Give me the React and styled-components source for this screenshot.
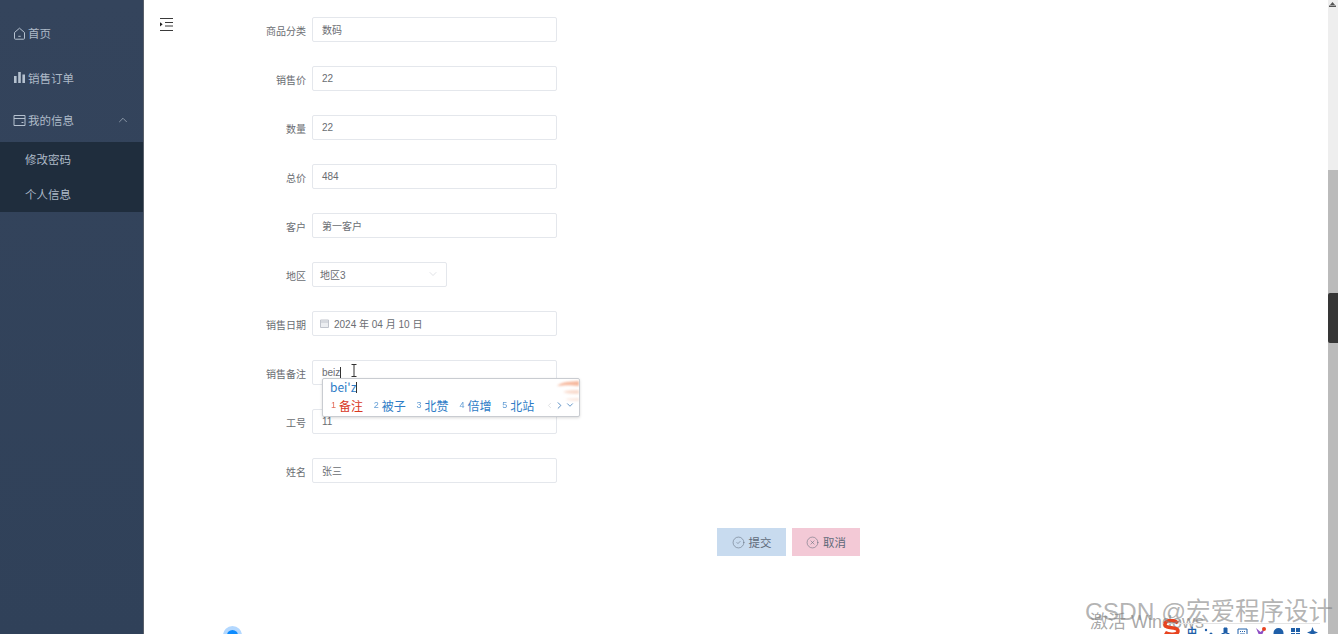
import React from "react";
import styled, { createGlobalStyle } from "styled-components";
import { ChevronDown, ChevronUp, ChevronLeft, ChevronRight, CircleCheck, CircleX } from "lucide-react";

const FONT = `"Noto Sans CJK SC", "Liberation Sans", sans-serif`;
const LATIN_FIRST = `"Liberation Sans", "Noto Sans CJK SC", sans-serif`;

const GlobalStyle = createGlobalStyle`
  html, body { margin: 0; padding: 0; height: 100%; overflow: hidden; background: #fff; }
  body { font-family: ${FONT}; }
`;

const Page = styled.div`
  position: relative;
  display: flex;
  width: 1338px;
  height: 634px;
  overflow: hidden;
  background: #fff;
`;

const Sidebar = styled.aside`
  width: 144px;
  flex: none;
  padding-top: 11px;
  box-sizing: border-box;
  background: linear-gradient(180deg, #34445c 0%, #304159 100%);
  border-right: 1px solid #59606a;
`;

const MenuItem = styled.div`
  display: flex;
  align-items: center;
  height: ${(p) => p.$h}px;
  box-sizing: border-box;
  padding: 0 13px ${(p) => p.$drop || 0}px 13px;
  gap: 2px;
  color: #aebac8;
  font-size: 11.5px;
`;

const MenuIcon = styled.svg`
  width: 13px;
  height: 13px;
  flex: none;
  fill: ${(p) => (p.$solid ? "#b5c1cf" : "none")};
  stroke: ${(p) => (p.$solid ? "none" : "#b5c1cf")};
  stroke-width: 1;
`;

const MenuArrow = styled(ChevronUp)`
  margin-left: auto;
  color: #aeb9c6;
`;

const SubMenu = styled.div`
  background: #1f2d3d;
`;

const SubItem = styled.div`
  display: flex;
  align-items: center;
  height: 35px;
  box-sizing: border-box;
  padding: 0 0 2px 25px;
  color: #aebac8;
  font-size: 11.5px;
`;

const ToggleColumn = styled.div`
  width: 100px;
  flex: none;
  padding: 18px 0 0 15px;
  box-sizing: border-box;
`;

const ToggleIcon = styled.svg`
  display: block;
  width: 15px;
  height: 13px;
`;

const Form = styled.form`
  padding-top: 17px;
  flex: 1;
`;

const Row = styled.div`
  display: flex;
  align-items: center;
  height: 25px;
  margin-bottom: 24px;
`;

const Label = styled.label`
  width: 62px;
  padding-top: 2px;
  text-align: right;
  color: #6a6d72;
  font-size: 10px;
`;

const Field = styled.div`
  position: relative;
  display: flex;
  align-items: center;
  width: ${(p) => p.$w || 245}px;
  height: 25px;
  margin-left: 6px;
  padding: 0 ${(p) => (p.$pad ? p.$pad : 9)}px 1px;
  box-sizing: border-box;
  border: 1px solid #e4e7ec;
  border-radius: 2px;
  color: #6a6d72;
  font-family: ${LATIN_FIRST};
  font-size: 10px;
  background: #fff;
`;

const SelectArrow = styled(ChevronDown)`
  margin-left: auto;
  color: #c0c4cc;
`;

const CalendarIcon = styled.svg`
  width: 9px;
  height: 9px;
  margin-right: 5px;
  fill: #eceef1;
  stroke: #c0c4cc;
  stroke-width: 1;
`;

const Caret = styled.span`
  display: inline-block;
  width: 1px;
  height: 11px;
  background: #333;
  vertical-align: -1px;
`;

const Beam = styled.svg`
  position: absolute;
  left: 37px;
  top: 3px;
  width: 8px;
  height: 13px;
  fill: none;
  stroke: #333;
  stroke-width: 1;
`;

const Ime = styled.div`
  position: absolute;
  z-index: 2;
  left: 9px;
  top: 17px;
  width: 258px;
  height: 39px;
  box-sizing: border-box;
  padding: 0 0 0 7px;
  overflow: hidden;
  background: #fff;
  border: 1px solid #c9ccd1;
  border-radius: 2px;
  box-shadow: 0 1px 3px rgba(0, 0, 0, 0.15);
  font-family: ${FONT};
`;

const ImeSwoosh = styled.svg`
  position: absolute;
  right: 0;
  top: 0;
  width: 26px;
  height: 24px;
  filter: blur(0.8px);
`;

const ImeInput = styled.div`
  position: relative;
  height: 16px;
  line-height: 15px;
  color: #2e7cc6;
  font-size: 12px;
`;

const ImeList = styled.div`
  position: relative;
  display: flex;
  align-items: center;
  height: 20px;
  padding-left: 1px;
`;

const Candidate = styled.span`
  display: inline-flex;
  align-items: center;
  gap: 3px;
  width: 43px;
  font-size: 12px;
  color: ${(p) => (p.$active ? "#d8381e" : "#2e7cc6")};

  small {
    font-size: 9px;
    opacity: 0.75;
    font-family: "Liberation Sans", sans-serif;
  }
`;

const ImePager = styled.span`
  display: flex;
  align-items: center;
  margin-left: auto;
  padding-right: 4px;
  color: #4a84bd;
`;

const ButtonRow = styled.div`
  display: flex;
  gap: 6px;
  margin-top: 45px;
  padding-left: 473px;
`;

const Button = styled.button`
  display: inline-flex;
  align-items: center;
  justify-content: center;
  gap: 4px;
  width: ${(p) => p.$w}px;
  height: 28px;
  padding: 0;
  border: 0;
  background: ${(p) => p.$bg};
  color: #5f6a79;
  font-family: ${FONT};
  font-size: 11.5px;
`;

const ScrollTrack = styled.div`
  position: absolute;
  right: 0;
  top: 0;
  width: 10px;
  height: 634px;
  background: linear-gradient(180deg, #eeeeee 0, #eeeeee 170px, #bbbbbb 170px, #bbbbbb 100%);
`;

const ScrollMark = styled.div`
  position: absolute;
  right: 0;
  top: 293px;
  width: 10px;
  height: 50px;
  background: #363636;
  border-radius: 2px 0 0 2px;
`;

const ScrollArrow = styled.svg`
  position: absolute;
  top: 2px;
  left: 1px;
  width: 7px;
  height: 5px;
  fill: #555;
`;

const Dot = styled.div`
  position: absolute;
  left: 223px;
  top: 626px;
  width: 11px;
  height: 11px;
  border: 4px solid #b3d8ff;
  border-radius: 50%;
  background: #0d8cff;
`;

const ActivateMark = styled.div`
  position: absolute;
  left: 1090px;
  top: 609px;
  color: rgba(120, 120, 120, 0.65);
  font-size: 18px;
  line-height: 26px;
  font-family: ${LATIN_FIRST};
`;

const Watermark = styled.div`
  position: absolute;
  left: 1085px;
  top: 596px;
  color: rgba(130, 130, 130, 0.6);
  font-size: 24.5px;
  line-height: 32px;
  white-space: nowrap;
  font-family: ${LATIN_FIRST};
`;

const Tray = styled.div`
  position: absolute;
  left: 1162px;
  top: 623px;
  display: flex;
  align-items: flex-start;
  gap: 6px;
  width: 158px;
  height: 11px;
  padding-top: 3px;
  border-top: 1px solid #e4e4e4;
  color: #1f5fa8;
  font-size: 10px;
  line-height: 10px;
  font-weight: 700;
`;

const TraySlot = styled.span`
  width: ${(p) => p.$w || 11}px;
  flex: none;
  text-align: center;
`;

const TrayLogo = styled.svg`
  width: 19px;
  height: 17px;
  margin-top: -8px;
  flex: none;
`;

const TrayIcon = styled.svg`
  display: block;
  width: 11px;
  height: 11px;
  flex: none;
`;

const fields = [
  { label: "商品分类", value: "数码" },
  { label: "销售价", value: "22" },
  { label: "数量", value: "22" },
  { label: "总价", value: "484" },
  { label: "客户", value: "第一客户" },
];

const candidates = ["备注", "被子", "北赞", "倍增", "北站"];

const App = () => {
  return (
    <Page>
      <GlobalStyle />
      <Sidebar>
        <MenuItem $h={44}>
          <MenuIcon viewBox="0 0 13 13">
            <path d="M1.500 5.500 6.500 1.200 11.500 5.500v5.800a.9.9 0 0 1-.9.9H2.400a.9.9 0 0 1-.9-.9Z" />
            <path d="M5.300 9.300h2.400" />
          </MenuIcon>
          首页
        </MenuItem>
        <MenuItem $h={45}>
          <MenuIcon $solid viewBox="0 0 13 13">
            <path d="M1 5h2.600v7H1zM5.200 1h2.600v11H5.200zM9.400 3.500H12V12H9.400z" />
          </MenuIcon>
          销售订单
        </MenuItem>
        <MenuItem $h={42} $drop={2}>
          <MenuIcon viewBox="0 0 13 13">
            <path d="M1 1.500h11v10H1zM1 4.500h11M8.500 8.500h2" />
          </MenuIcon>
          我的信息
          <MenuArrow size={14} strokeWidth={1.2} />
        </MenuItem>
        <SubMenu>
          <SubItem>修改密码</SubItem>
          <SubItem>个人信息</SubItem>
        </SubMenu>
      </Sidebar>

      <ToggleColumn>
        <ToggleIcon viewBox="0 0 15 13">
          <path d="M1 .5h13M6 4.500h8M6 8h8M1 12.500h13" stroke="#3a3a3a" strokeWidth="1" fill="none" />
          <path d="M1 4.200 3.600 6.300 1 8.400Z" fill="#222" />
        </ToggleIcon>
      </ToggleColumn>

      <Form>
        {fields.map((f) => (
          <Row key={f.label}>
            <Label>{f.label}</Label>
            <Field>{f.value}</Field>
          </Row>
        ))}
        <Row>
          <Label>地区</Label>
          <Field $w={135} $pad={7}>
            地区3
            <SelectArrow size={12} strokeWidth={1} />
          </Field>
        </Row>
        <Row>
          <Label>销售日期</Label>
          <Field $pad={7}>
            <CalendarIcon viewBox="0 0 9 9">
              <path d="M.5 1h8v7.500h-8zM.5 3h8" />
            </CalendarIcon>
            2024 年 04 月 10 日
          </Field>
        </Row>
        <Row>
          <Label>销售备注</Label>
          <Field>
            beiz
            <Caret />
            <Beam viewBox="0 0 8 13">
              <path d="M1.500.5h5M4 .5v12M1.500 12.500h5" />
            </Beam>
            <Ime>
              <ImeSwoosh viewBox="0 0 26 24">
                <path d="M4 7C10 2 18 3 26 2v5C18 6 12 6 4 7Z" fill="#f6b79c" />
                <path d="M10 13c5-2 10-2 16-2v4c-6 0-10 0-16-2Z" fill="#f9dccf" />
                <path d="M12 20c5-1 9-1 14-1v3c-5 0-9 0-14-2Z" fill="#fbe9e1" />
              </ImeSwoosh>
              <ImeInput>
                bei'z
                <Caret />
              </ImeInput>
              <ImeList>
                {candidates.map((c, i) => (
                  <Candidate key={c} $active={i === 0}>
                    <small>{i + 1}</small>
                    {c}
                  </Candidate>
                ))}
                <ImePager>
                  <ChevronLeft size={9} color="#d5d8dc" />
                  <ChevronRight size={11} />
                  <ChevronDown size={10} />
                </ImePager>
              </ImeList>
            </Ime>
          </Field>
        </Row>
        <Row>
          <Label>工号</Label>
          <Field>11</Field>
        </Row>
        <Row>
          <Label>姓名</Label>
          <Field>张三</Field>
        </Row>
        <ButtonRow>
          <Button type="button" $w={69} $bg="#c8dbef">
            <CircleCheck size={13} strokeWidth={1} />
            提交
          </Button>
          <Button type="button" $w={68} $bg="#f3c9d6">
            <CircleX size={13} strokeWidth={1} />
            取消
          </Button>
        </ButtonRow>
      </Form>

      <ScrollTrack>
        <ScrollArrow viewBox="0 0 7 5">
          <path d="M3.500 0 6 3H1ZM0 3.600h7V5H0Z" />
        </ScrollArrow>
      </ScrollTrack>
      <ScrollMark />
      <Dot />
      <ActivateMark>激活 Windows</ActivateMark>
      <Tray>
        <TrayLogo viewBox="0 0 19 17">
          <path d="M16 4C11 0 3 1 3 5.500c0 5 13 1.500 13 6.500 0 4-9 4-13 1.500" fill="none" stroke="#e8431f" strokeWidth="3.500" />
        </TrayLogo>
        <TraySlot $w={10}>中</TraySlot>
        <TrayIcon viewBox="0 0 11 11">
          <circle cx="3" cy="3" r="1.200" fill="#1f5fa8" />
          <circle cx="8" cy="7" r="1.500" fill="#1f5fa8" />
        </TrayIcon>
        <TrayIcon viewBox="0 0 11 11">
          <path d="M4 1h3v6H4zM2 6c0 4 7 4 7 0M5.500 9v2" fill="#1f5fa8" stroke="#1f5fa8" />
        </TrayIcon>
        <TrayIcon viewBox="0 0 11 11">
          <path d="M1 2h9v8H1zM3 4.500h1M5 4.500h1M7 4.500h1M3 7h5" fill="none" stroke="#1f5fa8" />
        </TrayIcon>
        <TrayIcon viewBox="0 0 11 11" style={{ width: 13 }}>
          <path d="M1 1 5.500 5 10 1 7 8 5.500 11 4 8Z" fill="#8e4fc4" />
          <circle cx="9" cy="2" r="2" fill="#e8431f" />
        </TrayIcon>
        <TrayIcon viewBox="0 0 11 11">
          <path d="M5.500 1a5 5 0 0 1 5 5v5H.5V6a5 5 0 0 1 5-5Z" fill="#1f5fa8" />
        </TrayIcon>
        <TrayIcon viewBox="0 0 11 11">
          <path d="M1 1h4v4H1zM6 1h4v4H6zM1 6h4v4H1zM6 6h4v4H6z" fill="#1f5fa8" />
        </TrayIcon>
        <TrayIcon viewBox="0 0 11 11">
          <path d="M5.500 0 7 4l4 1.500L7 7l-1.500 4L4 7 0 5.500 4 4Z" fill="#1f5fa8" />
        </TrayIcon>
      </Tray>
      <Watermark>CSDN @宏爱程序设计</Watermark>
    </Page>
  );
};

export default App;
